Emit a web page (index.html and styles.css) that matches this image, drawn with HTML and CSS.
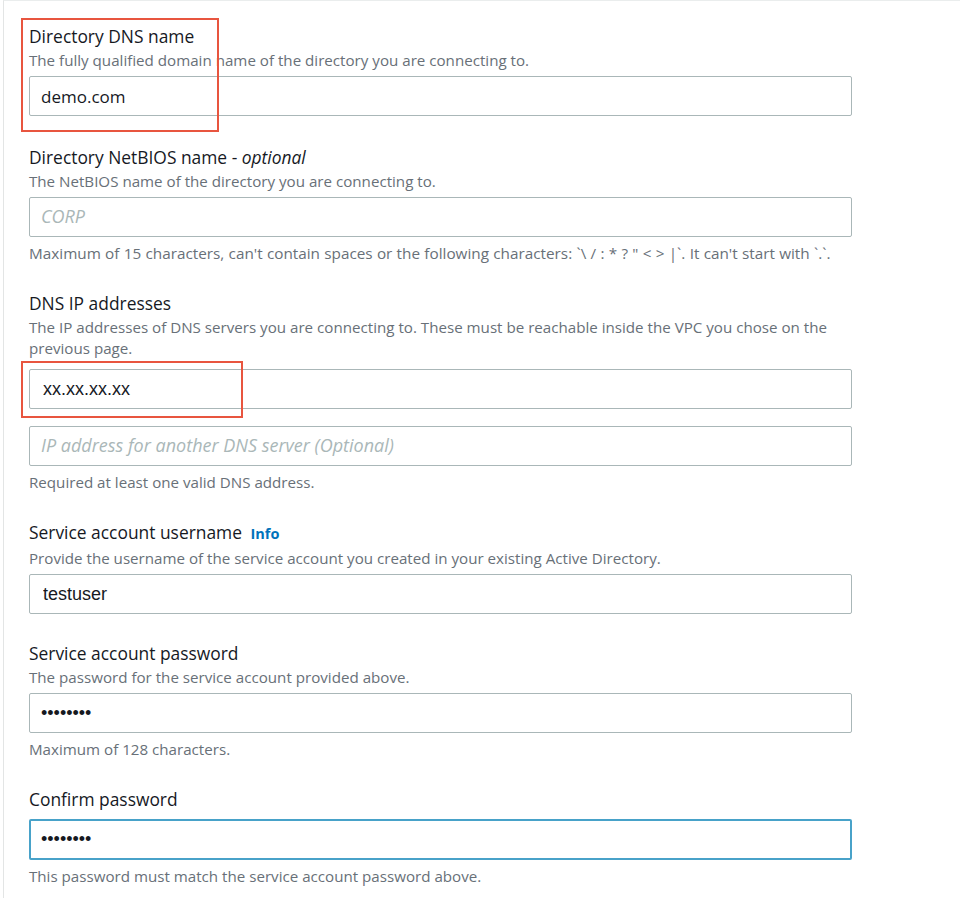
FILE: index.html
```html
<!DOCTYPE html>
<html lang="en">
<head>
<meta charset="utf-8">
<title>Directory details</title>
<link rel="stylesheet" href="styles.css">
</head>
<body>
<div class="panel">
  <div class="form">
    <div class="field field--plain">
      <div class="label">Directory DNS name</div>
      <div class="desc">The fully qualified domain name of the directory you are connecting to.</div>
      <input class="input input--sans" type="text" value="demo.com">
    </div>
    <div class="field">
      <div class="label">Directory NetBIOS name - <i>optional</i></div>
      <div class="desc">The NetBIOS name of the directory you are connecting to.</div>
      <input class="input" type="text" placeholder="CORP">
      <div class="hint hint--wide">Maximum of 15 characters, can't contain spaces or the following characters: `\ / : * ? " &lt; &gt; |`. It can't start with `.`.</div>
    </div>
    <div class="field">
      <div class="label">DNS IP addresses</div>
      <div class="desc">The IP addresses of DNS servers you are connecting to. These must be reachable inside the VPC you chose on the previous page.</div>
      <input class="input input--first input--pad" type="text" value="xx.xx.xx.xx">
      <input class="input input--next" type="text" placeholder="IP address for another DNS server (Optional)">
      <div class="hint">Required at least one valid DNS address.</div>
    </div>
    <div class="field">
      <div class="label">Service account username <a class="info" href="#">Info</a></div>
      <div class="desc">Provide the username of the service account you created in your existing Active Directory.</div>
      <input class="input input--pad" type="text" value="testuser">
    </div>
    <div class="field">
      <div class="label">Service account password</div>
      <div class="desc">The password for the service account provided above.</div>
      <input class="input" type="password" value="password">
      <div class="hint">Maximum of 128 characters.</div>
    </div>
    <div class="field">
      <div class="label">Confirm password</div>
      <input class="input input--nodesc input--focus" type="password" value="password">
      <div class="hint">This password must match the service account password above.</div>
    </div>
  </div>
  <div class="mark mark--dns"></div>
  <div class="mark mark--ip"></div>
</div>
</body>
</html>
```
FILE: styles.css
```css
html, body {
  margin: 0;
  padding: 0;
  background: #ffffff;
}

body {
  font-family: "Open Sans", "Noto Sans", sans-serif;
  color: #16191f;
}

.panel {
  position: relative;
  margin-left: 3px;
  border-left: 1px solid #e3e5e5;
  border-top: 1px solid #eaeded;
  min-height: 898px;
  padding: 23px 0 0 25px;
  box-sizing: border-box;
}

.form {
  display: flex;
  flex-direction: column;
  gap: 27px;
  width: 823px;
}

.field {
  display: flex;
  flex-direction: column;
}

.field--plain {
  padding-bottom: 2px;
}

.label {
  font-size: 17.4px;
  line-height: 24px;
  color: #16191f;
  white-space: nowrap;
}

.info {
  margin-left: 4px;
  font-size: 14.5px;
  font-weight: 700;
  color: #0073bb;
  text-decoration: none;
}

.desc {
  margin-top: 2px;
  font-size: 15.15px;
  line-height: 21px;
  color: #687078;
}

.hint {
  margin-top: 6px;
  font-size: 15.15px;
  line-height: 21px;
  color: #687078;
  white-space: nowrap;
}

.hint--wide {
  font-size: 15.3px;
  word-spacing: 0.3px;
}

.input {
  display: block;
  box-sizing: border-box;
  width: 823px;
  height: 40px;
  margin: 5px 0 0 0;
  padding: 0 11px;
  border: 1px solid #aab7b8;
  border-radius: 2px;
  background: #ffffff;
  font-family: "Liberation Sans", Arial, sans-serif;
  font-size: 18px;
  color: #16191f;
  outline: none;
}

.input--sans {
  font-family: "Open Sans", "Noto Sans", sans-serif;
  font-size: 17px;
}

.input--pad {
  padding-left: 13px;
}

.input--first {
  margin-top: 10px;
}

.input--next {
  margin-top: 17px;
}

.input--nodesc {
  margin-top: 8px;
  height: 41px;
}

.input--focus {
  border: 2px solid #48a2c9;
  padding-left: 10px;
}

.input::placeholder {
  font-family: "Open Sans", "Noto Sans", sans-serif;
  font-style: italic;
  font-size: 18px;
  color: #aab7b8;
}

.mark {
  position: absolute;
  border: 2px solid #e8553f;
  box-sizing: border-box;
}

.mark--dns {
  left: 17px;
  top: 17px;
  width: 198px;
  height: 114px;
}

.mark--ip {
  left: 17px;
  top: 360px;
  width: 222px;
  height: 57px;
}
```
